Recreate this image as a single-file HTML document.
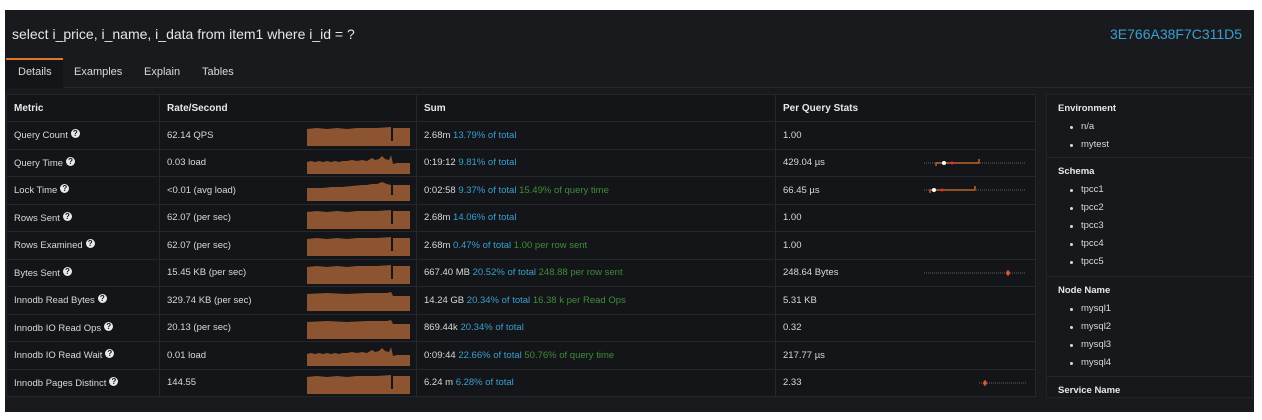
<!DOCTYPE html>
<html><head><meta charset="utf-8"><style>
body{margin:0;width:1262px;height:420px;background:#fff;font-family:"Liberation Sans",sans-serif;position:relative;overflow:hidden}
.p{position:absolute;left:5px;top:10px;width:1249px;height:402px;background:#191a1d}
.a{position:absolute;white-space:nowrap}
.t{font-size:14px;color:#e6e6e6}
.tab{font-size:11px;color:#d8d9da;top:66px}
table{position:absolute;left:6px;top:94px;border-collapse:collapse;font-size:9.5px;color:#d8d9da;table-layout:fixed}
td{border:1px solid #25272b;background:#141518;height:26.5px;padding:0 0 0 7px;white-space:nowrap;position:relative}
th{border:1px solid #25272b;background:#141518;height:26px;text-align:left;padding:0 0 0 7px;font-size:10px;color:#e8e8e8}
.q{display:inline-block;width:9px;height:9px;border-radius:50%;background:#e8e8e8;color:#141518;font-size:8px;font-weight:bold;text-align:center;line-height:9px;vertical-align:2px;margin-left:3px}
.b{color:#3a9fd1}.g{color:#3f8d3a}
svg.s{position:absolute;left:147px;top:4px}
svg.d{position:absolute;left:148px;top:7px}
.r{position:absolute;left:1046px;top:94px;width:205px;height:302px;border:1px solid #222428;background:#17181b;font-size:9.5px;color:#d8d9da;overflow:hidden}
.r .h{font-weight:bold;font-size:9.5px;color:#e8e8e8;margin:0 0 0 11px;line-height:14px}
.r ul{margin:2px 0 0 0;padding-left:34px;list-style:none}
.r li{height:18px;line-height:18px;position:relative}
.r li:before{content:"";position:absolute;left:-11px;top:8px;width:3px;height:3px;border-radius:50%;background:#d8d9da}
.r .sec{border-bottom:1px solid #25272b;padding-top:7px;box-sizing:border-box;overflow:hidden}
</style></head><body>
<div class="p"></div>
<div class="a t" style="left:12px;top:26px">select i_price, i_name, i_data from item1 where i_id = ?</div>
<div class="a" style="left:1110px;top:26px;font-size:14px;color:#3a9fd1">3E766A38F7C311D5</div>
<div class="a" style="left:6px;top:58px;width:57px;height:30px;border-top:2px solid #e0752d;background:#141518;box-sizing:border-box"></div>
<div class="a" style="left:63px;top:87px;width:1190px;border-top:1px solid #25272b"></div>
<div class="a tab" style="left:18px">Details</div>
<div class="a tab" style="left:74px">Examples</div>
<div class="a tab" style="left:144px">Explain</div>
<div class="a tab" style="left:202px">Tables</div>
<svg width="0" height="0" style="position:absolute"><defs>
<polygon id="f" points="0,3 10,2 20,3 30,2 40,3 50,2 60,2 70,2 84,1 84,15 86,15 86,2 103,2 103,20 0,20" fill="#8c5430"/>
<polygon id="n" points="0,8 4,7 8,8 12,7 16,8 20,7 24,8 28,7 32,8 36,7 40,7 45,6 50,7 55,6 60,7 65,4 68,6 72,5 75,2 78,5 82,6 84,1 86,10 90,9 95,9 103,9 103,20 0,20" fill="#8c5430"/>
<polygon id="m" points="0,7 15,7 25,6 35,6 45,5 55,4 60,4 65,3 70,3 75,1 80,3 84,4 84,14 86,14 86,4 103,4 103,20 0,20" fill="#8c5430"/>
<polygon id="st" points="0,3 20,2 40,3 60,2 70,2 80,2 84,1 86,5 103,5 103,20 0,20" fill="#8c5430"/>
</defs></svg>
<table>
<tr><th style="width:145px">Metric</th><th style="width:249px">Rate/Second</th><th style="width:351px">Sum</th><th style="width:252px">Per Query Stats</th></tr>
<tr><td>Query Count<span class="q">?</span></td><td>62.14 QPS<svg class="s" width="103" height="20"><use href="#f"/></svg></td><td>2.68m <span class="b">13.79% of total</span></td><td>1.00</td></tr>
<tr><td>Query Time<span class="q">?</span></td><td>0.03 load<svg class="s" width="103" height="20"><use href="#n"/></svg></td><td>0:19:12 <span class="b">9.81% of total</span></td><td>429.04 µs<svg class="d" width="102" height="12"><line x1="0" y1="6" x2="102" y2="6" stroke="#777" stroke-dasharray="1,1" stroke-width=".7"/><path d="M12,9V6H55V2" stroke="#e0752d" fill="none" stroke-width="1.2"/><circle cx="20" cy="6" r="2" fill="#fff"/><circle cx="28" cy="6" r="1.5" fill="#e02f2f"/></svg></td></tr>
<tr><td>Lock Time<span class="q">?</span></td><td>&lt;0.01 (avg load)<svg class="s" width="103" height="20"><use href="#m"/></svg></td><td>0:02:58 <span class="b">9.37% of total</span> <span class="g">15.49% of query time</span></td><td>66.45 µs<svg class="d" width="102" height="12"><line x1="0" y1="6" x2="102" y2="6" stroke="#777" stroke-dasharray="1,1" stroke-width=".7"/><path d="M6,9V6H51V2" stroke="#e0752d" fill="none" stroke-width="1.2"/><circle cx="10" cy="6" r="2" fill="#fff"/><circle cx="18" cy="6" r="1.5" fill="#e02f2f"/></svg></td></tr>
<tr><td>Rows Sent<span class="q">?</span></td><td>62.07 (per sec)<svg class="s" width="103" height="20"><use href="#f"/></svg></td><td>2.68m <span class="b">14.06% of total</span></td><td>1.00</td></tr>
<tr><td>Rows Examined<span class="q">?</span></td><td>62.07 (per sec)<svg class="s" width="103" height="20"><use href="#f"/></svg></td><td>2.68m <span class="b">0.47% of total</span> <span class="g">1.00 per row sent</span></td><td>1.00</td></tr>
<tr><td>Bytes Sent<span class="q">?</span></td><td>15.45 KB (per sec)<svg class="s" width="103" height="20"><use href="#f"/></svg></td><td>667.40 MB <span class="b">20.52% of total</span> <span class="g">248.88 per row sent</span></td><td>248.64 Bytes<svg class="d" width="102" height="12"><line x1="0" y1="6" x2="102" y2="6" stroke="#777" stroke-dasharray="1,1" stroke-width=".7"/><circle cx="84" cy="6" r="2" fill="#e0452d"/><line x1="84" y1="3" x2="84" y2="9" stroke="#e0752d"/></svg></td></tr>
<tr><td>Innodb Read Bytes<span class="q">?</span></td><td>329.74 KB (per sec)<svg class="s" width="103" height="20"><use href="#st"/></svg></td><td>14.24 GB <span class="b">20.34% of total</span> <span class="g">16.38 k per Read Ops</span></td><td>5.31 KB</td></tr>
<tr><td>Innodb IO Read Ops<span class="q">?</span></td><td>20.13 (per sec)<svg class="s" width="103" height="20"><use href="#st"/></svg></td><td>869.44k <span class="b">20.34% of total</span></td><td>0.32</td></tr>
<tr><td>Innodb IO Read Wait<span class="q">?</span></td><td>0.01 load<svg class="s" width="103" height="20"><use href="#n"/></svg></td><td>0:09:44 <span class="b">22.66% of total</span> <span class="g">50.76% of query time</span></td><td>217.77 µs</td></tr>
<tr><td>Innodb Pages Distinct<span class="q">?</span></td><td>144.55<svg class="s" width="103" height="20"><use href="#f"/></svg></td><td>6.24 m <span class="b">6.28% of total</span></td><td>2.33<svg class="d" width="102" height="12"><line x1="55" y1="6" x2="102" y2="6" stroke="#777" stroke-dasharray="1,1" stroke-width=".7"/><circle cx="61" cy="6" r="2" fill="#e0452d"/><line x1="61" y1="3" x2="61" y2="9" stroke="#e0752d"/></svg></td></tr>
</table>
<div class="r">
<div class="sec" style="height:63px"><div class="h">Environment</div><ul><li>n/a</li><li>mytest</li></ul></div>
<div class="sec" style="height:119px"><div class="h">Schema</div><ul><li>tpcc1</li><li>tpcc2</li><li>tpcc3</li><li>tpcc4</li><li>tpcc5</li></ul></div>
<div class="sec" style="height:100px"><div class="h">Node Name</div><ul><li>mysql1</li><li>mysql2</li><li>mysql3</li><li>mysql4</li></ul></div>
<div class="sec" style="border:0"><div class="h">Service Name</div></div>
</div>
</body></html>
